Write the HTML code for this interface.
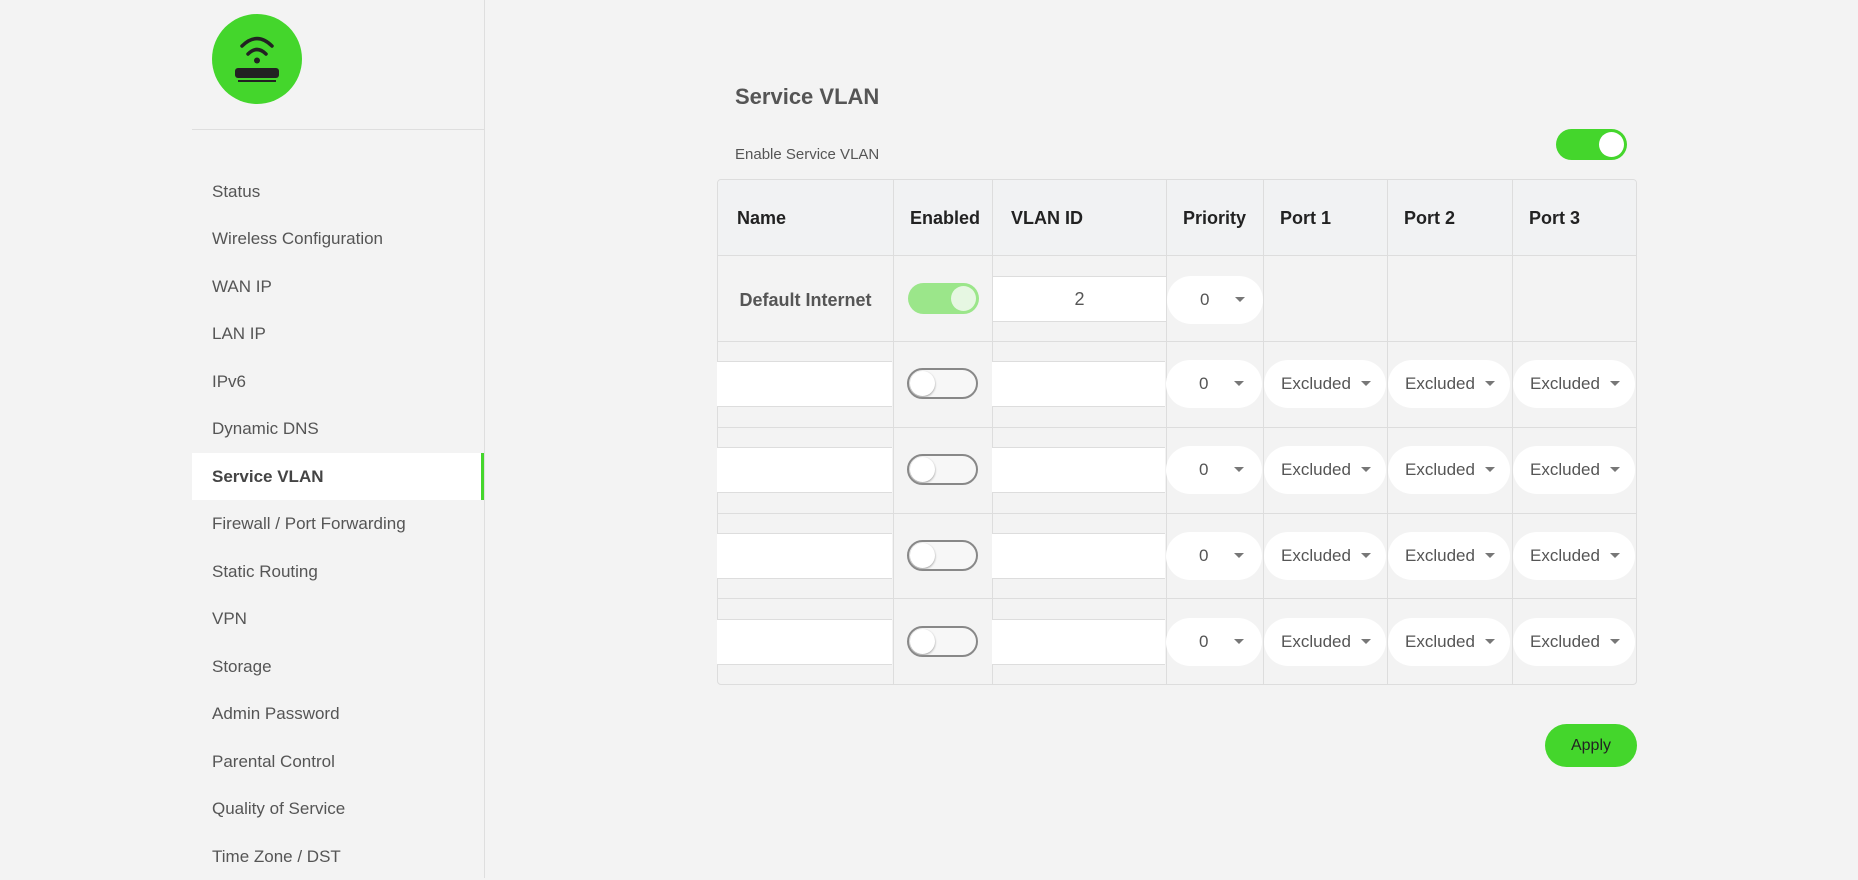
<!DOCTYPE html>
<html><head><meta charset="utf-8"><style>
*{box-sizing:border-box;margin:0;padding:0}
body{width:1858px;height:878px;background:#f3f3f3;font-family:"Liberation Sans",sans-serif;position:relative;overflow:hidden;color:#555}
.sb{position:absolute;left:484px;top:0;width:1px;height:878px;background:#dedede}
.hr{position:absolute;left:192px;top:129px;width:292px;height:1px;background:#dedede}
.logo{position:absolute;left:212px;top:14px;width:90px;height:90px;border-radius:50%;background:#44d62c}
.nav{position:absolute;left:192px;width:292px;height:47px;line-height:47px;padding-left:20px;font-size:17px;color:#555}
.nav.act{background:#fff;color:#444;font-weight:bold;border-right:3px solid #44d62c}
h1{position:absolute;left:735px;top:84px;font-size:22px;color:#555;font-weight:bold}
.lbl{position:absolute;left:735px;top:146px;font-size:15px;color:#555}
.tg{position:absolute;border-radius:20px}
.tbl{position:absolute;left:717px;top:179px;width:920px;height:506px;border:1px solid #ddd;border-radius:4px;overflow:hidden}
.vl{position:absolute;top:0;width:1px;height:506px;background:#ddd}
.hl{position:absolute;left:0;width:920px;height:1px;background:#ddd}
.th{position:absolute;top:0;height:76px;line-height:76px;font-size:18px;font-weight:bold;color:#222}
.inp{position:absolute;background:#fff;border-top:1px solid #ddd;border-bottom:1px solid #ddd;height:46px;line-height:44px;text-align:center;font-size:18px;color:#555}
.sel{position:absolute;background:#fff;border-radius:24px;height:48px;line-height:48px;font-size:17px;color:#555}
.sel i{position:absolute;top:21px;width:0;height:0;border-left:5px solid transparent;border-right:5px solid transparent;border-top:5px solid #777}
.apply{position:absolute;left:1545px;top:724px;width:92px;height:43px;border-radius:22px;background:#44d62c;color:#222;font-size:16px;line-height:43px;text-align:center}
</style></head><body>
<div class="logo"><svg width="90" height="90" viewBox="0 0 90 90">
<path d="M30 32 Q45 17 60 32" fill="none" stroke="#222" stroke-width="3.5" stroke-linecap="round"/>
<path d="M36 40 Q45 31 54 40" fill="none" stroke="#222" stroke-width="3.5" stroke-linecap="round"/>
<circle cx="45" cy="46.5" r="3" fill="#222"/>
<rect x="23" y="54" width="44" height="10" rx="3" fill="#222"/>
<rect x="26" y="66" width="38" height="2" fill="#222"/>
</svg></div>
<div class="hr"></div><div class="sb"></div>
<div class="nav" style="top:168px">Status</div>
<div class="nav" style="top:215px">Wireless Configuration</div>
<div class="nav" style="top:263px">WAN IP</div>
<div class="nav" style="top:310px">LAN IP</div>
<div class="nav" style="top:358px">IPv6</div>
<div class="nav" style="top:405px">Dynamic DNS</div>
<div class="nav act" style="top:453px">Service VLAN</div>
<div class="nav" style="top:500px">Firewall / Port Forwarding</div>
<div class="nav" style="top:548px">Static Routing</div>
<div class="nav" style="top:595px">VPN</div>
<div class="nav" style="top:643px">Storage</div>
<div class="nav" style="top:690px">Admin Password</div>
<div class="nav" style="top:738px">Parental Control</div>
<div class="nav" style="top:785px">Quality of Service</div>
<div class="nav" style="top:833px">Time Zone / DST</div>

<h1>Service VLAN</h1>
<div class="lbl">Enable Service VLAN</div>
<div class="tg" style="left:1556px;top:129px;width:71px;height:31px;background:#44d62c"><div style="position:absolute;right:3px;top:3px;width:25px;height:25px;border-radius:50%;background:#fff"></div></div>

<div class="tbl">
<div style="position:absolute;left:0;top:0;width:920px;height:76px;background:#f1f2f3"></div>
<div class="vl" style="left:175px"></div><div class="vl" style="left:274px"></div><div class="vl" style="left:448px"></div><div class="vl" style="left:545px"></div><div class="vl" style="left:669px"></div><div class="vl" style="left:794px"></div>
<div class="hl" style="top:75px"></div><div class="hl" style="top:161px"></div><div class="hl" style="top:247px"></div><div class="hl" style="top:333px"></div><div class="hl" style="top:418px"></div>
<div class="th" style="left:19px">Name</div><div class="th" style="left:192px">Enabled</div><div class="th" style="left:293px">VLAN ID</div><div class="th" style="left:465px">Priority</div><div class="th" style="left:562px">Port 1</div><div class="th" style="left:686px">Port 2</div><div class="th" style="left:811px">Port 3</div>

<div style="position:absolute;left:0;top:96px;width:175px;height:48px;line-height:48px;text-align:center;font-size:18px;font-weight:bold;color:#555">Default Internet</div>
<div class="tg" style="left:190px;top:103px;width:71px;height:31px;background:#9be68a"><div style="position:absolute;right:3px;top:3px;width:25px;height:25px;border-radius:50%;background:#e6f7e2"></div></div>
<div class="inp" style="left:275px;top:96px;width:173px">2</div>
<div class="sel" style="left:449px;top:96px;width:96px"><span style="position:absolute;left:33px">0</span><i style="left:68px"></i></div>
</div>
<div id="rows"></div>
<script>
var h='';[0,1,2,3].forEach(function(k){var t=179+182+86*k;
h+='<div class="inp" style="left:717px;top:'+t+'px;width:175px"></div>';
h+='<div class="tg" style="left:907px;top:'+(t+7)+'px;width:71px;height:31px;border:2px solid #888;background:#f7f7f7"><div style="position:absolute;left:1px;top:1px;width:25px;height:25px;border-radius:50%;background:#fff;box-shadow:0 1px 2px #999"></div></div>';
h+='<div class="inp" style="left:992px;top:'+t+'px;width:173px"></div>';
h+='<div class="sel" style="left:1166px;top:'+(t-1)+'px;width:96px"><span style="position:absolute;left:33px">0</span><i style="left:68px"></i></div>';
[1264,1388,1513].forEach(function(x){h+='<div class="sel" style="left:'+x+'px;top:'+(t-1)+'px;width:122px"><span style="position:absolute;left:17px">Excluded</span><i style="left:97px"></i></div>';});
});document.getElementById('rows').innerHTML=h;
</script>
<div class="apply">Apply</div>
</body></html>
